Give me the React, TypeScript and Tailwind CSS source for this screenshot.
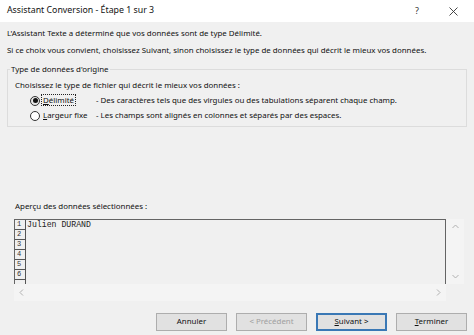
import React from 'react';

const rows = [1, 2, 3, 4, 5, 6];

const Radio = ({ checked }: { checked?: boolean }) => (
  <span className={`w-[10px] h-[10px] rounded-full border border-[#333] flex items-center justify-center shrink-0 ${checked ? 'bg-[#e6e6e6]' : 'bg-white'}`}>
    {checked && <span className="w-[5px] h-[5px] rounded-full bg-[#111]" />}
  </span>
);

const Button = ({ children, disabled, primary }: { children: React.ReactNode; disabled?: boolean; primary?: boolean }) => (
  <div
    className={`w-[71px] h-[18px] flex items-center justify-center bg-[#e1e1e1] ${
      primary ? 'border-2 border-[#3a78b5]' : 'border border-[#adadad]'
    } ${disabled ? 'text-[#a0a0a0]' : 'text-[#111]'}`}
  >
    {children}
  </div>
);

export default function App() {
  return (
    <div className="w-[474px] h-[335px] bg-[#f0f0f0] flex flex-col overflow-hidden text-[7.9px] text-[#111] font-['Noto_Sans','Liberation_Sans',sans-serif]">
      {/* title bar */}
      <div className="h-[22px] bg-white flex items-center pl-[7px] shrink-0">
        <span className="text-[8.8px] text-[#111]">Assistant Conversion - Étape 1 sur 3</span>
        <span className="ml-auto text-[9px] text-[#333]">?</span>
        <svg className="ml-[30px] mr-[16px]" width="9" height="9" viewBox="0 0 9 9">
          <path d="M0.5 0.5 L8.5 8.5 M8.5 0.5 L0.5 8.5" stroke="#333" strokeWidth="0.9" />
        </svg>
      </div>

      <div className="flex-1 flex flex-col px-[7px]">
        <p className="mt-[3px] leading-[17px]">L'Assistant Texte a déterminé que vos données sont de type Délimité.</p>
        <p className="leading-[17px] whitespace-nowrap">Si ce choix vous convient, choisissez Suivant, sinon choisissez le type de données qui décrit le mieux vos données.</p>

        <fieldset className="mt-[3px] border border-[#dcdcdc] pl-[7px] pb-[3px]">
          <legend className="ml-[-5px] px-[1px] leading-[14px]">Type de données d'origine</legend>
          <p className="mt-[2px] leading-[15px]">Choisissez le type de fichier qui décrit le mieux vos données :</p>
          <div className="flex items-center h-[15px] pl-[15px] whitespace-nowrap">
            <Radio checked />
            <span className="w-[56px] pl-[1px] shrink-0">
              <span className="border border-dotted border-[#222] px-[1px]">
                <span className="underline">D</span>élimité
              </span>
            </span>
            <span>- Des caractères tels que des virgules ou des tabulations séparent chaque champ.</span>
          </div>
          <div className="flex items-center h-[15px] pl-[15px] whitespace-nowrap">
            <Radio />
            <span className="w-[56px] pl-[3px] shrink-0">
              <span className="underline">L</span>argeur fixe
            </span>
            <span>- Les champs sont alignés en colonnes et séparés par des espaces.</span>
          </div>
        </fieldset>

        <p className="mt-[72px] ml-[8px] leading-[14px]">Aperçu des données sélectionnées :</p>

        <div className="mt-[6px] ml-[7px] w-[452px] flex">
          <div className="w-[432px] flex flex-col">
            <div className="h-[65px] border-t border-l border-r border-[#646464] flex overflow-hidden">
              <div className="w-[11px] border-r border-[#555] flex flex-col shrink-0">
                {rows.map(n => (
                  <div key={n} className="h-[10px] border-b border-[#555] text-[7px] leading-[9px] text-[#333] pl-[2px] font-['Liberation_Mono',monospace] shrink-0">
                    {n}
                  </div>
                ))}
              </div>
              <div className="pl-[1px] text-[8.2px] leading-[10px] text-[#222] font-['Liberation_Mono',monospace]">Julien DURAND</div>
            </div>
            <div className="h-[17px] bg-[#f4f4f4] flex items-center justify-between px-[5px]">
              <svg width="5" height="7" viewBox="0 0 5 7"><path d="M4 0.5 L1 3.5 L4 6.5" fill="none" stroke="#b0b0b0" strokeWidth="1" /></svg>
              <svg width="5" height="7" viewBox="0 0 5 7"><path d="M1 0.5 L4 3.5 L1 6.5" fill="none" stroke="#b0b0b0" strokeWidth="1" /></svg>
            </div>
          </div>
          <div className="w-[18px] h-[65px] bg-[#f4f4f4] flex flex-col items-center justify-between py-[5px]">
            <svg width="7" height="5" viewBox="0 0 7 5"><path d="M0.5 4 L3.5 1 L6.5 4" fill="none" stroke="#b0b0b0" strokeWidth="1" /></svg>
            <svg width="7" height="5" viewBox="0 0 7 5"><path d="M0.5 1 L3.5 4 L6.5 1" fill="none" stroke="#b0b0b0" strokeWidth="1" /></svg>
          </div>
        </div>

        <div className="mt-[12px] flex justify-end gap-[9px]">
          <Button>Annuler</Button>
          <Button disabled>&lt; Précédent</Button>
          <Button primary>
            <span><span className="underline">S</span>uivant &gt;</span>
          </Button>
          <Button>
            <span><span className="underline">T</span>erminer</span>
          </Button>
        </div>
      </div>
    </div>
  );
}
